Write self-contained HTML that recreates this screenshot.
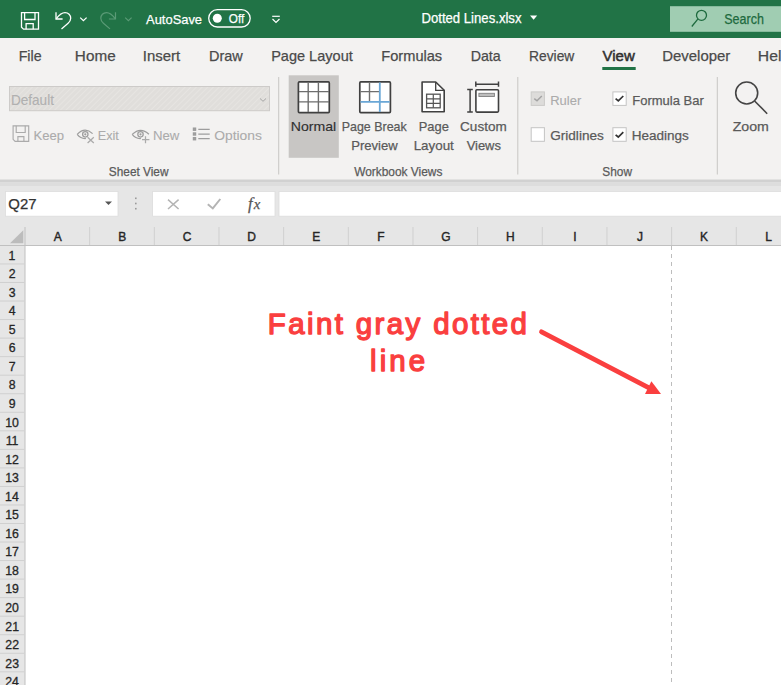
<!DOCTYPE html>
<html><head><meta charset="utf-8"><style>
html,body{margin:0;padding:0;background:#ffffff;overflow:hidden;width:781px;height:685px}
svg{display:block;font-family:"Liberation Sans",sans-serif}
</style></head><body>
<svg width="781" height="685" viewBox="0 0 781 685">
<rect x="0" y="0" width="781" height="38" fill="#217346"/>
<rect x="670" y="6.2" width="111" height="25.6" fill="#a0cdb2"/>
<rect x="0" y="38" width="781" height="142" fill="#f3f2f1"/>
<rect x="0" y="179.5" width="781" height="3.2" fill="#d1d1d1"/>
<rect x="0" y="182.7" width="781" height="3.3" fill="#dddddd"/>
<rect x="0" y="186" width="781" height="59.4" fill="#e6e6e6"/>
<rect x="25" y="245.9" width="756" height="440" fill="#ffffff"/>
<rect x="0" y="245.9" width="25" height="440" fill="#e6e6e6"/>
<g fill="none" stroke="#ffffff" stroke-width="1.3">
<path d="M21.5 12.7 H38.5 V29.2 H23.5 L21.5 27.2 Z"/>
<path d="M24.6 12.7 V19.5 H35 V12.7"/>
<path d="M26.1 29.2 V23.6 H33.2 V29.2"/>
<path d="M56 12.2 V19 H62.6"/>
<path d="M56.2 18.8 C59.2 14.8 62 12.6 65 12.6 C68.4 12.6 70.7 15.2 70.7 18.3 C70.7 20.4 69.6 21.9 68.1 23.2 L61.5 28.9"/>
<path d="M80.2 17.6 L83.4 20.6 L86.6 17.6"/>
</g>
<g fill="none" stroke="#5a9a76" stroke-width="1.2">
<path d="M115.5 12.2 V19 H108.9"/>
<path d="M115.3 18.8 C112.3 14.8 109.5 12.6 106.5 12.6 C103.1 12.6 100.8 15.2 100.8 18.3 C100.8 20.4 101.9 21.9 103.4 23.2 L110 28.9"/>
<path d="M125.2 17.6 L128.4 20.6 L131.6 17.6"/>
</g>
<text x="146.10" y="23.70" font-size="13.60" fill="#ffffff" font-weight="normal" textLength="55.94" lengthAdjust="spacingAndGlyphs" stroke="#ffffff" stroke-width="0.25">AutoSave</text>
<rect x="208.7" y="9.7" width="41.5" height="17.3" rx="8.65" fill="none" stroke="#ffffff" stroke-width="1.3"/>
<circle cx="217.3" cy="18.3" r="4.5" fill="#ffffff"/>
<text x="228.77" y="23.30" font-size="13.20" fill="#ffffff" font-weight="normal" textLength="15.48" lengthAdjust="spacingAndGlyphs" stroke="#ffffff" stroke-width="0.25">Off</text>
<g fill="none" stroke="#ffffff" stroke-width="1.2"><path d="M272.2 16.3 H279.8"/><path d="M272.5 19 L276 22.4 L279.5 19"/></g>
<text x="421.45" y="22.70" font-size="13.80" fill="#ffffff" font-weight="normal" textLength="100.08" lengthAdjust="spacingAndGlyphs" stroke="#ffffff" stroke-width="0.25">Dotted Lines.xlsx</text>
<path d="M530 15.4 H537.2 L533.6 19.8 Z" fill="#ffffff"/>
<g fill="none" stroke="#1d6a3e" stroke-width="1.3"><circle cx="701.5" cy="15.3" r="5"/><path d="M697.8 19.2 L691.8 26.5"/></g>
<text x="724.24" y="24.00" font-size="14.20" fill="#1d6a3e" font-weight="normal" textLength="39.62" lengthAdjust="spacingAndGlyphs" stroke="#1d6a3e" stroke-width="0.25">Search</text>
<text x="18.66" y="60.80" font-size="15.00" fill="#4a4a4a" font-weight="normal" textLength="22.93" lengthAdjust="spacingAndGlyphs" stroke="#4a4a4a" stroke-width="0.25">File</text>
<text x="74.88" y="60.80" font-size="15.00" fill="#4a4a4a" font-weight="normal" textLength="40.77" lengthAdjust="spacingAndGlyphs" stroke="#4a4a4a" stroke-width="0.25">Home</text>
<text x="142.76" y="60.80" font-size="15.00" fill="#4a4a4a" font-weight="normal" textLength="37.33" lengthAdjust="spacingAndGlyphs" stroke="#4a4a4a" stroke-width="0.25">Insert</text>
<text x="208.94" y="60.80" font-size="15.00" fill="#4a4a4a" font-weight="normal" textLength="33.74" lengthAdjust="spacingAndGlyphs" stroke="#4a4a4a" stroke-width="0.25">Draw</text>
<text x="271.14" y="60.80" font-size="15.00" fill="#4a4a4a" font-weight="normal" textLength="81.65" lengthAdjust="spacingAndGlyphs" stroke="#4a4a4a" stroke-width="0.25">Page Layout</text>
<text x="381.33" y="60.80" font-size="15.00" fill="#4a4a4a" font-weight="normal" textLength="60.84" lengthAdjust="spacingAndGlyphs" stroke="#4a4a4a" stroke-width="0.25">Formulas</text>
<text x="470.66" y="60.80" font-size="15.00" fill="#4a4a4a" font-weight="normal" textLength="30.07" lengthAdjust="spacingAndGlyphs" stroke="#4a4a4a" stroke-width="0.25">Data</text>
<text x="529.00" y="60.80" font-size="15.00" fill="#4a4a4a" font-weight="normal" textLength="45.29" lengthAdjust="spacingAndGlyphs" stroke="#4a4a4a" stroke-width="0.25">Review</text>
<text x="602.52" y="60.80" font-size="15.00" fill="#303030" font-weight="normal" textLength="32.27" lengthAdjust="spacingAndGlyphs" stroke="#303030" stroke-width="0.5">View</text>
<rect x="602.3" y="67" width="33.4" height="3" fill="#217346"/>
<text x="662.31" y="60.80" font-size="15.00" fill="#4a4a4a" font-weight="normal" textLength="67.97" lengthAdjust="spacingAndGlyphs" stroke="#4a4a4a" stroke-width="0.25">Developer</text>
<text x="757.84" y="60.80" font-size="15.00" fill="#4a4a4a" font-weight="normal" textLength="32.42" lengthAdjust="spacingAndGlyphs" stroke="#4a4a4a" stroke-width="0.25">Help</text>
<defs><pattern id="hatch" width="4" height="4" patternUnits="userSpaceOnUse" patternTransform="rotate(45)"><rect width="4" height="4" fill="#e0dedb"/><rect width="1" height="4" fill="#e6e4e1"/></pattern></defs>
<rect x="9.5" y="86.5" width="260" height="24.2" fill="url(#hatch)" stroke="#cdcbc9" stroke-width="1"/>
<text x="11.02" y="104.60" font-size="14.10" fill="#b0b0b0" font-weight="normal" textLength="42.90" lengthAdjust="spacingAndGlyphs" stroke="#b0b0b0" stroke-width="0.1">Default</text>
<path d="M260 98.5 L263 101.3 L266 98.5" fill="none" stroke="#a6a6a6" stroke-width="1"/>
<g fill="none" stroke="#ababab" stroke-width="1.15">
<path d="M13.1 125.8 H28.7 V141.3 H15.1 L13.1 139.3 Z"/><path d="M16.2 125.8 V132.5 H25.2 V125.8"/><path d="M17.9 141.3 V136.6 H23.9 V141.3"/>
</g>
<g fill="none" stroke="#9d9d9d" stroke-width="1.25">
<path d="M77.2 134.4 Q84.8 126.3 92.6 133.6"/><path d="M77.2 134.4 Q80.8 138.9 85.9 138.5"/><circle cx="85.3" cy="134.3" r="2.7"/><path d="M87.6 137.2 L93.8 143 M93.8 137.2 L87.6 143" stroke="#ababab"/>
<path d="M132.2 134.4 Q140.6 126.3 148.9 134.3"/><path d="M132.2 134.4 Q135.8 138.9 140.9 138.5"/><circle cx="140.5" cy="134.3" r="2.7"/><path d="M145.5 136.2 V143.3 M142 139.6 H149.4" stroke="#ababab"/>
<path d="M198.3 129.4 H209.7 M198.3 134.1 H209.7 M198.3 138.6 H209.7"/>
<rect x="193.4" y="128.1" width="2.2" height="2.2"/><rect x="193.4" y="132.9" width="2.2" height="2.2"/><rect x="193.4" y="137.6" width="2.2" height="2.2"/>
</g>
<g fill="#9d9d9d"><circle cx="85.3" cy="134.3" r="1.1"/><circle cx="140.5" cy="134.3" r="1.1"/></g>
<text x="33.55" y="139.90" font-size="13.70" fill="#ababab" font-weight="normal" textLength="30.58" lengthAdjust="spacingAndGlyphs" stroke="#ababab" stroke-width="0.1">Keep</text>
<text x="97.79" y="139.90" font-size="13.70" fill="#ababab" font-weight="normal" textLength="21.10" lengthAdjust="spacingAndGlyphs" stroke="#ababab" stroke-width="0.1">Exit</text>
<text x="152.94" y="139.90" font-size="13.70" fill="#ababab" font-weight="normal" textLength="26.40" lengthAdjust="spacingAndGlyphs" stroke="#ababab" stroke-width="0.1">New</text>
<text x="214.28" y="139.90" font-size="13.70" fill="#ababab" font-weight="normal" textLength="47.62" lengthAdjust="spacingAndGlyphs" stroke="#ababab" stroke-width="0.1">Options</text>
<text x="108.87" y="175.60" font-size="13.20" fill="#5a5a5a" font-weight="normal" textLength="59.58" lengthAdjust="spacingAndGlyphs" stroke="#5a5a5a" stroke-width="0.25">Sheet View</text>
<rect x="278.2" y="77" width="1" height="97.5" fill="#c8c6c4"/>
<rect x="517.3" y="77" width="1" height="97.5" fill="#c8c6c4"/>
<rect x="716.8" y="77" width="1" height="97.5" fill="#c8c6c4"/>
<rect x="288.7" y="75.3" width="50.1" height="82.5" fill="#c8c6c4"/>
<rect x="298.4" y="81.9" width="30.9" height="30.7" rx="1" fill="#ffffff" stroke="#404040" stroke-width="1.7"/>
<path d="M308.2 82.5 V112 M318.4 82.5 V112 M299 91.6 H329 M299 101.9 H329" stroke="#6e6e6e" stroke-width="1.4" fill="none"/>
<rect x="359.8" y="81.9" width="30.6" height="30.7" rx="1" fill="#ffffff" stroke="#404040" stroke-width="1.7"/>
<path d="M369.5 82.5 V101.9 M360.5 91.6 H379.8" stroke="#6e6e6e" stroke-width="1.4" fill="none"/>
<path d="M379.8 82.6 V112 M360.5 101.9 H389.7" stroke="#6aa7d6" stroke-width="1.8" fill="none"/>
<path d="M422.1 82 H435.7 L444.2 90.3 V111.8 H422.1 Z" fill="#ffffff" stroke="#404040" stroke-width="1.6" stroke-linejoin="round"/>
<path d="M435.7 82 V90.3 H444.2" fill="none" stroke="#404040" stroke-width="1.3"/>
<rect x="426.6" y="94.2" width="13.6" height="13.6" fill="none" stroke="#555555" stroke-width="1.3"/>
<path d="M433.3 94.2 V107.8 M426.6 98.8 H440.2 M426.6 103.3 H440.2" fill="none" stroke="#555555" stroke-width="1.2"/>
<g fill="none" stroke="#404040" stroke-width="1.5">
<path d="M470.1 89.6 V112 M467.2 89.6 H472.8 M467.2 112 H472.8"/>
<path d="M475.8 84.3 H498.5 M475.8 81.6 V86.8 M498.5 81.6 V86.8"/>
</g>
<rect x="475.9" y="89.7" width="22.6" height="22.4" rx="1" fill="#ffffff" stroke="#404040" stroke-width="1.6"/>
<rect x="478.9" y="93.3" width="15.5" height="3.2" fill="#bdbdbd" stroke="#808080" stroke-width="0.9"/>
<text x="290.87" y="131.40" font-size="13.50" fill="#303030" font-weight="normal" textLength="45.38" lengthAdjust="spacingAndGlyphs" stroke="#303030" stroke-width="0.15">Normal</text>
<text x="341.70" y="131.40" font-size="13.50" fill="#5a5a5a" font-weight="normal" textLength="65.00" lengthAdjust="spacingAndGlyphs" stroke="#5a5a5a" stroke-width="0.25">Page Break</text>
<text x="351.26" y="149.50" font-size="13.50" fill="#5a5a5a" font-weight="normal" textLength="46.40" lengthAdjust="spacingAndGlyphs" stroke="#5a5a5a" stroke-width="0.25">Preview</text>
<text x="418.67" y="131.40" font-size="13.50" fill="#5a5a5a" font-weight="normal" textLength="30.16" lengthAdjust="spacingAndGlyphs" stroke="#5a5a5a" stroke-width="0.25">Page</text>
<text x="413.63" y="149.50" font-size="13.50" fill="#5a5a5a" font-weight="normal" textLength="40.17" lengthAdjust="spacingAndGlyphs" stroke="#5a5a5a" stroke-width="0.25">Layout</text>
<text x="460.12" y="131.40" font-size="13.50" fill="#5a5a5a" font-weight="normal" textLength="46.56" lengthAdjust="spacingAndGlyphs" stroke="#5a5a5a" stroke-width="0.25">Custom</text>
<text x="466.64" y="149.50" font-size="13.50" fill="#5a5a5a" font-weight="normal" textLength="34.31" lengthAdjust="spacingAndGlyphs" stroke="#5a5a5a" stroke-width="0.25">Views</text>
<text x="354.14" y="175.60" font-size="13.20" fill="#5a5a5a" font-weight="normal" textLength="88.29" lengthAdjust="spacingAndGlyphs" stroke="#5a5a5a" stroke-width="0.25">Workbook Views</text>
<rect x="531.2" y="91.9" width="13.2" height="13.5" fill="#dddcda" stroke="#cbcac8" stroke-width="1"/>
<path d="M534.3 98.6 L537 100.8 L541.8 96" fill="none" stroke="#a3a3a3" stroke-width="1.4"/>
<rect x="612.9" y="91.9" width="13.3" height="13.5" fill="#ffffff" stroke="#c4c4c4" stroke-width="1"/>
<path d="M615.6 98.6 L618.3 100.8 L623.3 96" fill="none" stroke="#333" stroke-width="1.7"/>
<rect x="531.2" y="127.7" width="13.2" height="13.6" fill="#ffffff" stroke="#c4c4c4" stroke-width="1"/>
<rect x="612.9" y="127.7" width="13.3" height="13.6" fill="#ffffff" stroke="#c4c4c4" stroke-width="1"/>
<path d="M615.6 134.8 L618.3 137 L623.3 132.2" fill="none" stroke="#333" stroke-width="1.7"/>
<text x="550.16" y="104.60" font-size="13.70" fill="#ababab" font-weight="normal" textLength="31.10" lengthAdjust="spacingAndGlyphs" stroke="#ababab" stroke-width="0.1">Ruler</text>
<text x="632.26" y="104.60" font-size="13.70" fill="#5a5a5a" font-weight="normal" textLength="71.46" lengthAdjust="spacingAndGlyphs" stroke="#5a5a5a" stroke-width="0.25">Formula Bar</text>
<text x="550.22" y="140.20" font-size="13.70" fill="#5a5a5a" font-weight="normal" textLength="53.57" lengthAdjust="spacingAndGlyphs" stroke="#5a5a5a" stroke-width="0.25">Gridlines</text>
<text x="631.72" y="140.20" font-size="13.70" fill="#5a5a5a" font-weight="normal" textLength="57.16" lengthAdjust="spacingAndGlyphs" stroke="#5a5a5a" stroke-width="0.25">Headings</text>
<text x="602.27" y="175.60" font-size="13.20" fill="#5a5a5a" font-weight="normal" textLength="29.69" lengthAdjust="spacingAndGlyphs" stroke="#5a5a5a" stroke-width="0.25">Show</text>
<g fill="none" stroke="#444444" stroke-width="1.6"><circle cx="746.7" cy="93" r="11"/><path d="M754.6 101 L767.2 113.7"/></g>
<text x="732.68" y="131.40" font-size="13.50" fill="#5a5a5a" font-weight="normal" textLength="36.19" lengthAdjust="spacingAndGlyphs" stroke="#5a5a5a" stroke-width="0.25">Zoom</text>
<rect x="5.5" y="191.5" width="112.5" height="24.7" fill="#ffffff" stroke="#dddddd" stroke-width="0.8"/>
<text x="8.33" y="208.90" font-size="14.50" fill="#333333" font-weight="normal" textLength="28.22" lengthAdjust="spacingAndGlyphs" stroke="#333333" stroke-width="0.25">Q27</text>
<path d="M105 201.5 H112 L108.5 205 Z" fill="#555"/>
<g fill="#9a9a9a"><rect x="135" y="197.5" width="1.6" height="1.6"/><rect x="135" y="202.7" width="1.6" height="1.6"/><rect x="135" y="207.9" width="1.6" height="1.6"/></g>
<rect x="152.6" y="191.5" width="122.4" height="24.7" fill="#ffffff" stroke="#dddddd" stroke-width="0.8"/>
<path d="M168 199.6 L178.6 209 M178.6 199.6 L168 209" stroke="#b4b4b4" stroke-width="1.5" fill="none"/>
<path d="M207.8 204.3 L212.8 208.4 L220.3 199" stroke="#b4b4b4" stroke-width="2" fill="none"/>
<g font-family="Liberation Serif" font-style="italic" fill="#555" stroke="#555" stroke-width="0.25"><text x="247.9" y="208.6" font-size="16.5">f</text><text x="253.8" y="208.6" font-size="14.8">x</text></g>
<rect x="279" y="191.5" width="510" height="24.7" fill="#ffffff" stroke="#dddddd" stroke-width="0.8"/>
<rect x="0" y="245" width="781" height="1" fill="#c0c0c0"/>
<rect x="24.5" y="227" width="1" height="458" fill="#c0c0c0"/>
<path d="M10 243.3 L23.3 243.3 L23.3 230.2 Z" fill="#bcbcbc"/>
<text x="53.74" y="241.40" font-size="12.00" fill="#262626" font-weight="normal" textLength="8.00" lengthAdjust="spacingAndGlyphs" stroke="#262626" stroke-width="0.4">A</text>
<rect x="89.16" y="227" width="1" height="18" fill="#d0d0d0"/>
<text x="118.22" y="241.40" font-size="12.00" fill="#262626" font-weight="normal" textLength="8.00" lengthAdjust="spacingAndGlyphs" stroke="#262626" stroke-width="0.4">B</text>
<rect x="153.82" y="227" width="1" height="18" fill="#d0d0d0"/>
<text x="182.64" y="241.40" font-size="12.00" fill="#262626" font-weight="normal" textLength="8.67" lengthAdjust="spacingAndGlyphs" stroke="#262626" stroke-width="0.4">C</text>
<rect x="218.48" y="227" width="1" height="18" fill="#d0d0d0"/>
<text x="247.18" y="241.40" font-size="12.00" fill="#262626" font-weight="normal" textLength="8.67" lengthAdjust="spacingAndGlyphs" stroke="#262626" stroke-width="0.4">D</text>
<rect x="283.14" y="227" width="1" height="18" fill="#d0d0d0"/>
<text x="312.14" y="241.40" font-size="12.00" fill="#262626" font-weight="normal" textLength="8.00" lengthAdjust="spacingAndGlyphs" stroke="#262626" stroke-width="0.4">E</text>
<rect x="347.79999999999995" y="227" width="1" height="18" fill="#d0d0d0"/>
<text x="377.13" y="241.40" font-size="12.00" fill="#262626" font-weight="normal" textLength="7.33" lengthAdjust="spacingAndGlyphs" stroke="#262626" stroke-width="0.4">F</text>
<rect x="412.46" y="227" width="1" height="18" fill="#d0d0d0"/>
<text x="441.16" y="241.40" font-size="12.00" fill="#262626" font-weight="normal" textLength="9.33" lengthAdjust="spacingAndGlyphs" stroke="#262626" stroke-width="0.4">G</text>
<rect x="477.12" y="227" width="1" height="18" fill="#d0d0d0"/>
<text x="506.03" y="241.40" font-size="12.00" fill="#262626" font-weight="normal" textLength="8.67" lengthAdjust="spacingAndGlyphs" stroke="#262626" stroke-width="0.4">H</text>
<rect x="541.78" y="227" width="1" height="18" fill="#d0d0d0"/>
<text x="573.36" y="241.40" font-size="12.00" fill="#262626" font-weight="normal" textLength="3.33" lengthAdjust="spacingAndGlyphs" stroke="#262626" stroke-width="0.4">I</text>
<rect x="606.4399999999999" y="227" width="1" height="18" fill="#d0d0d0"/>
<text x="637.03" y="241.40" font-size="12.00" fill="#262626" font-weight="normal" textLength="6.00" lengthAdjust="spacingAndGlyphs" stroke="#262626" stroke-width="0.4">J</text>
<rect x="671.0999999999999" y="227" width="1" height="18" fill="#d0d0d0"/>
<text x="699.92" y="241.40" font-size="12.00" fill="#262626" font-weight="normal" textLength="8.00" lengthAdjust="spacingAndGlyphs" stroke="#262626" stroke-width="0.4">K</text>
<rect x="735.76" y="227" width="1" height="18" fill="#d0d0d0"/>
<text x="765.36" y="241.40" font-size="12.00" fill="#262626" font-weight="normal" textLength="6.67" lengthAdjust="spacingAndGlyphs" stroke="#262626" stroke-width="0.4">L</text>
<rect x="0" y="263.44" width="24.5" height="1" fill="#d0d0d0"/>
<text x="8.60" y="259.70" font-size="12.30" fill="#262626" font-weight="normal" textLength="6.84" lengthAdjust="spacingAndGlyphs" stroke="#262626" stroke-width="0.3">1</text>
<rect x="0" y="281.98" width="24.5" height="1" fill="#d0d0d0"/>
<text x="8.79" y="278.24" font-size="12.30" fill="#262626" font-weight="normal" textLength="6.84" lengthAdjust="spacingAndGlyphs" stroke="#262626" stroke-width="0.3">2</text>
<rect x="0" y="300.52000000000004" width="24.5" height="1" fill="#d0d0d0"/>
<text x="8.79" y="296.78" font-size="12.30" fill="#262626" font-weight="normal" textLength="6.84" lengthAdjust="spacingAndGlyphs" stroke="#262626" stroke-width="0.3">3</text>
<rect x="0" y="319.06" width="24.5" height="1" fill="#d0d0d0"/>
<text x="8.82" y="315.32" font-size="12.30" fill="#262626" font-weight="normal" textLength="6.84" lengthAdjust="spacingAndGlyphs" stroke="#262626" stroke-width="0.3">4</text>
<rect x="0" y="337.6" width="24.5" height="1" fill="#d0d0d0"/>
<text x="8.79" y="333.86" font-size="12.30" fill="#262626" font-weight="normal" textLength="6.84" lengthAdjust="spacingAndGlyphs" stroke="#262626" stroke-width="0.3">5</text>
<rect x="0" y="356.14000000000004" width="24.5" height="1" fill="#d0d0d0"/>
<text x="8.73" y="352.40" font-size="12.30" fill="#262626" font-weight="normal" textLength="6.84" lengthAdjust="spacingAndGlyphs" stroke="#262626" stroke-width="0.3">6</text>
<rect x="0" y="374.68" width="24.5" height="1" fill="#d0d0d0"/>
<text x="8.79" y="370.94" font-size="12.30" fill="#262626" font-weight="normal" textLength="6.84" lengthAdjust="spacingAndGlyphs" stroke="#262626" stroke-width="0.3">7</text>
<rect x="0" y="393.22" width="24.5" height="1" fill="#d0d0d0"/>
<text x="8.76" y="389.48" font-size="12.30" fill="#262626" font-weight="normal" textLength="6.84" lengthAdjust="spacingAndGlyphs" stroke="#262626" stroke-width="0.3">8</text>
<rect x="0" y="411.76000000000005" width="24.5" height="1" fill="#d0d0d0"/>
<text x="8.79" y="408.02" font-size="12.30" fill="#262626" font-weight="normal" textLength="6.84" lengthAdjust="spacingAndGlyphs" stroke="#262626" stroke-width="0.3">9</text>
<rect x="0" y="430.3" width="24.5" height="1" fill="#d0d0d0"/>
<text x="5.13" y="426.56" font-size="12.30" fill="#262626" font-weight="normal" textLength="13.68" lengthAdjust="spacingAndGlyphs" stroke="#262626" stroke-width="0.3">10</text>
<rect x="0" y="448.84" width="24.5" height="1" fill="#d0d0d0"/>
<text x="5.65" y="445.10" font-size="12.30" fill="#262626" font-weight="normal" textLength="12.77" lengthAdjust="spacingAndGlyphs" stroke="#262626" stroke-width="0.3">11</text>
<rect x="0" y="467.38000000000005" width="24.5" height="1" fill="#d0d0d0"/>
<text x="5.22" y="463.64" font-size="12.30" fill="#262626" font-weight="normal" textLength="13.68" lengthAdjust="spacingAndGlyphs" stroke="#262626" stroke-width="0.3">12</text>
<rect x="0" y="485.92" width="24.5" height="1" fill="#d0d0d0"/>
<text x="5.16" y="482.18" font-size="12.30" fill="#262626" font-weight="normal" textLength="13.68" lengthAdjust="spacingAndGlyphs" stroke="#262626" stroke-width="0.3">13</text>
<rect x="0" y="504.46" width="24.5" height="1" fill="#d0d0d0"/>
<text x="5.07" y="500.72" font-size="12.30" fill="#262626" font-weight="normal" textLength="13.68" lengthAdjust="spacingAndGlyphs" stroke="#262626" stroke-width="0.3">14</text>
<rect x="0" y="523.0" width="24.5" height="1" fill="#d0d0d0"/>
<text x="5.16" y="519.26" font-size="12.30" fill="#262626" font-weight="normal" textLength="13.68" lengthAdjust="spacingAndGlyphs" stroke="#262626" stroke-width="0.3">15</text>
<rect x="0" y="541.54" width="24.5" height="1" fill="#d0d0d0"/>
<text x="5.16" y="537.80" font-size="12.30" fill="#262626" font-weight="normal" textLength="13.68" lengthAdjust="spacingAndGlyphs" stroke="#262626" stroke-width="0.3">16</text>
<rect x="0" y="560.0799999999999" width="24.5" height="1" fill="#d0d0d0"/>
<text x="5.22" y="556.34" font-size="12.30" fill="#262626" font-weight="normal" textLength="13.68" lengthAdjust="spacingAndGlyphs" stroke="#262626" stroke-width="0.3">17</text>
<rect x="0" y="578.62" width="24.5" height="1" fill="#d0d0d0"/>
<text x="5.16" y="574.88" font-size="12.30" fill="#262626" font-weight="normal" textLength="13.68" lengthAdjust="spacingAndGlyphs" stroke="#262626" stroke-width="0.3">18</text>
<rect x="0" y="597.16" width="24.5" height="1" fill="#d0d0d0"/>
<text x="5.19" y="593.42" font-size="12.30" fill="#262626" font-weight="normal" textLength="13.68" lengthAdjust="spacingAndGlyphs" stroke="#262626" stroke-width="0.3">19</text>
<rect x="0" y="615.6999999999999" width="24.5" height="1" fill="#d0d0d0"/>
<text x="5.28" y="611.96" font-size="12.30" fill="#262626" font-weight="normal" textLength="13.68" lengthAdjust="spacingAndGlyphs" stroke="#262626" stroke-width="0.3">20</text>
<rect x="0" y="634.2399999999999" width="24.5" height="1" fill="#d0d0d0"/>
<text x="5.34" y="630.50" font-size="12.30" fill="#262626" font-weight="normal" textLength="13.68" lengthAdjust="spacingAndGlyphs" stroke="#262626" stroke-width="0.3">21</text>
<rect x="0" y="652.78" width="24.5" height="1" fill="#d0d0d0"/>
<text x="5.37" y="649.04" font-size="12.30" fill="#262626" font-weight="normal" textLength="13.68" lengthAdjust="spacingAndGlyphs" stroke="#262626" stroke-width="0.3">22</text>
<rect x="0" y="671.3199999999999" width="24.5" height="1" fill="#d0d0d0"/>
<text x="5.31" y="667.58" font-size="12.30" fill="#262626" font-weight="normal" textLength="13.68" lengthAdjust="spacingAndGlyphs" stroke="#262626" stroke-width="0.3">23</text>
<rect x="0" y="689.8599999999999" width="24.5" height="1" fill="#d0d0d0"/>
<text x="5.22" y="686.12" font-size="12.30" fill="#262626" font-weight="normal" textLength="13.68" lengthAdjust="spacingAndGlyphs" stroke="#262626" stroke-width="0.3">24</text>
<path d="M671.5 246 V685" stroke="#bdbdbd" stroke-width="1" stroke-dasharray="4 4"/>
<text x="267.81" y="333.60" font-size="29.50" fill="#fa3f3f" font-weight="normal" textLength="259.21" lengthAdjust="spacing" stroke="#fa3f3f" stroke-width="1.35" stroke-linejoin="round">Faint gray dotted</text>
<text x="370.06" y="370.70" font-size="29.50" fill="#fa3f3f" font-weight="normal" textLength="55.20" lengthAdjust="spacing" stroke="#fa3f3f" stroke-width="1.35" stroke-linejoin="round">line</text>
<path d="M541.5 331.8 L648.5 387.6" stroke="#fa3f3f" stroke-width="4.8" stroke-linecap="round" fill="none"/>
<path d="M661 394 L651.4 381.2 L645 394 Z" fill="#fa3f3f"/>
</svg>
</body></html>
